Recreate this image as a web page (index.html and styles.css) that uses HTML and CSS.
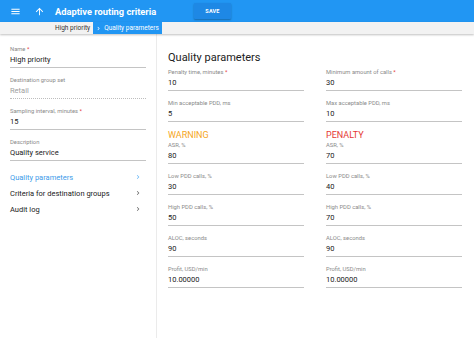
FILE: index.html
```html
<!DOCTYPE html>
<html>
<head>
<meta charset="utf-8">
<link rel="stylesheet" href="styles.css">
</head>
<body>
<header class="topbar">
  <svg class="icon menu-icon" viewBox="0 0 24 24" width="11" height="11"><path d="M3 6h18v2H3zM3 11h18v2H3zM3 16h18v2H3z" fill="#fff"/></svg>
  <svg class="icon up-icon" viewBox="0 0 24 24" width="11" height="11"><path d="M4 12l1.41 1.41L11 7.83V20h2V7.83l5.58 5.59L20 12l-8-8-8 8z" fill="#fff"/></svg>
  <h1 class="title">Adaptive routing criteria</h1>
  <button class="save">SAVE</button>
</header>
<nav class="crumbs">
  <span class="crumb">High priority</span>
  <span class="crumb-active"><svg viewBox="0 0 24 24" width="7" height="7"><path d="M8.6 16.6L13.2 12 8.6 7.4 10 6l6 6-6 6z" fill="#fff"/></svg>Quality parameters</span>
</nav>
<main class="main">
  <aside class="side">
    <div class="field"><div class="label">Name <span class="req">*</span></div><div class="value">High priority</div></div>
    <div class="field disabled"><div class="label">Destination group set</div><div class="value">Retail</div></div>
    <div class="field"><div class="label">Sampling interval, minutes <span class="req">*</span></div><div class="value">15</div></div>
    <div class="field"><div class="label">Description</div><div class="value">Quality service</div></div>
    <ul class="menu">
      <li class="menu-item active"><span>Quality parameters</span><svg viewBox="0 0 24 24" width="8" height="8"><path d="M8.6 16.6L13.2 12 8.6 7.4 10 6l6 6-6 6z"/></svg></li>
      <li class="menu-item"><span>Criteria for destination groups</span><svg viewBox="0 0 24 24" width="8" height="8"><path d="M8.6 16.6L13.2 12 8.6 7.4 10 6l6 6-6 6z"/></svg></li>
      <li class="menu-item"><span>Audit log</span><svg viewBox="0 0 24 24" width="8" height="8"><path d="M8.6 16.6L13.2 12 8.6 7.4 10 6l6 6-6 6z"/></svg></li>
    </ul>
  </aside>
  <section class="content">
    <h2 class="heading">Quality parameters</h2>
    <div class="cols">
      <div class="col">
        <div class="field"><div class="label">Penalty time, minutes <span class="req">*</span></div><div class="value">10</div></div>
        <div class="field"><div class="label">Min acceptable PDD, ms</div><div class="value">5</div></div>
        <div class="section warn">WARNING</div>
        <div class="field"><div class="label">ASR, %</div><div class="value">80</div></div>
        <div class="field"><div class="label">Low PDD calls, %</div><div class="value">30</div></div>
        <div class="field"><div class="label">High PDD calls, %</div><div class="value">50</div></div>
        <div class="field"><div class="label">ALOC, seconds</div><div class="value">90</div></div>
        <div class="field"><div class="label">Profit, USD/min</div><div class="value">10.00000</div></div>
      </div>
      <div class="col">
        <div class="field"><div class="label">Minimum amount of calls <span class="req">*</span></div><div class="value">30</div></div>
        <div class="field"><div class="label">Max acceptable PDD, ms</div><div class="value">10</div></div>
        <div class="section penalty">PENALTY</div>
        <div class="field"><div class="label">ASR, %</div><div class="value">70</div></div>
        <div class="field"><div class="label">Low PDD calls, %</div><div class="value">40</div></div>
        <div class="field"><div class="label">High PDD calls, %</div><div class="value">70</div></div>
        <div class="field"><div class="label">ALOC, seconds</div><div class="value">90</div></div>
        <div class="field"><div class="label">Profit, USD/min</div><div class="value">10.00000</div></div>
      </div>
    </div>
  </section>
</main>
</body>
</html>
```
FILE: styles.css
```css
* { box-sizing: border-box; }
html, body { margin: 0; padding: 0; }
body {
  width: 474px;
  height: 338px;
  overflow: hidden;
  font-family: Roboto, "Liberation Sans", sans-serif;
  background: #fff;
  color: #212121;
  display: flex;
  flex-direction: column;
}
.topbar {
  height: 22px;
  background: #2196f3;
  display: flex;
  align-items: center;
  padding-left: 10px;
  flex: none;
}
.icon { display: block; }
.up-icon { margin-left: 13px; }
.title {
  margin: 0 0 0 10px;
  font-size: 9.3px;
  font-weight: 700;
  color: #fff;
  width: 139px;
  white-space: nowrap;
}
.save {
  border: none;
  background: #1e88e5;
  color: #fff;
  font-family: inherit;
  font-size: 5.5px;
  font-weight: 700;
  height: 16px;
  width: 37px;
  padding: 0;
  border-radius: 1px;
  box-shadow: 0 1px 2px rgba(0,0,0,.3);
  letter-spacing: .2px;
}
.crumbs {
  height: 12px;
  background: #f2f2f2;
  box-shadow: 0 1px 2px rgba(0,0,0,.25);
  display: flex;
  align-items: stretch;
  padding-left: 55px;
  font-size: 6.5px;
  flex: none;
  position: relative;
  z-index: 1;
}
.crumb { display: flex; align-items: center; color: #333; }
.crumb-active {
  display: flex;
  align-items: center;
  margin-left: 3px;
  background: #2196f3;
  color: #fff;
  padding: 0 3px 0 2px;
  gap: 2px;
}
.main {
  flex: 1;
  display: flex;
}
.side {
  width: 157px;
  border-right: 1px solid #ebebeb;
  padding: 11px 10px 0 10px;
  flex: none;
}
.field {
  border-bottom: 1px solid #c4c4c4;
  padding-bottom: 1px;
  margin-bottom: 8px;
}
.label {
  font-size: 5.8px;
  line-height: 8px;
  color: #8a8a8a;
}
.req { color: #e53935; }
.value {
  font-size: 7.5px;
  line-height: 12px;
  margin-top: 1px;
  color: #212121;
}
.disabled { border-bottom: 1px dotted #bdbdbd; }
.disabled .value { color: #9e9e9e; }
.menu {
  list-style: none;
  margin: 7px 0 0 0;
  padding: 0;
}
.menu-item {
  display: flex;
  justify-content: space-between;
  align-items: center;
  height: 16px;
  font-size: 7.5px;
  color: #212121;
  padding-right: 4px;
}
.menu-item svg { fill: #616161; }
.menu-item.active { color: #3d9be9; }
.menu-item.active svg { fill: #64b5f6; }
.content {
  flex: 1;
  padding: 17px 11px 0 11px;
}
.heading {
  margin: 0;
  font-size: 11px;
  font-weight: 400;
  line-height: 14px;
  color: #212121;
  margin-bottom: 3px;
}
.cols {
  display: grid;
  grid-template-columns: 136px 136px;
  column-gap: 22px;
}
.section {
  font-size: 9px;
  line-height: 12px;
  margin-top: -1px;
}
.warn { color: #f5a623; }
.penalty { color: #e53935; }
```
